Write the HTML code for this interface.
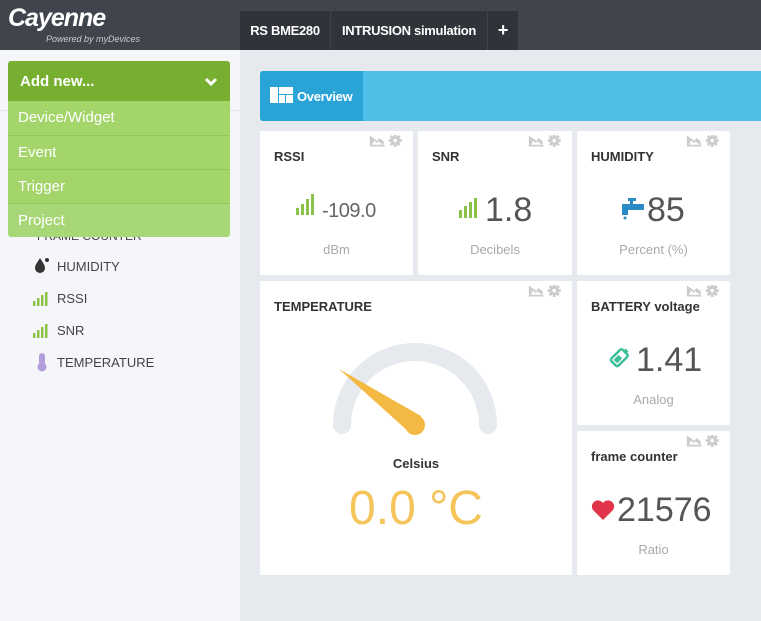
<!DOCTYPE html>
<html><head><meta charset="utf-8"><style>
*{box-sizing:border-box;margin:0;padding:0}
body{width:761px;height:621px;overflow:hidden;font-family:"Liberation Sans",sans-serif;background:#e6e9ee;position:relative}
.abs{position:absolute}
#top{left:0;top:0;width:761px;height:50px;background:#40444d}
#sidebar{left:0;top:50px;width:240px;height:571px;background:#f4f6f9}
.tab{position:absolute;top:11px;height:39px;background:#30333a;color:#fff;font-weight:bold;font-size:13px;line-height:39px;text-align:center;letter-spacing:-0.3px}
.card{position:absolute;background:#fff;border-radius:2px}
.card h3{position:absolute;left:14px;top:18px;font-size:13px;font-weight:bold;color:#333}
.icons{position:absolute;right:10px;top:4px;width:34px;height:12px}
.val{position:absolute;left:0;width:100%;text-align:center;color:#555;font-weight:normal}
.unit{position:absolute;left:0;width:100%;text-align:center;color:#aaa;font-size:13px}
.menu{position:absolute;left:8px;width:222px;height:34px;background:#a4d56a;color:#fff;font-size:15px;line-height:34px;padding-left:10px;border-top:1px solid #93c65a}
.side{position:absolute;left:57px;font-size:13px;color:#444}
</style></head><body>
<div id="top" class="abs"></div>
<div class="abs" style="left:8px;top:4px;color:#fff;font-size:25px;font-style:italic;font-weight:bold;letter-spacing:-1px">Cayenne</div>
<div class="abs" style="left:46px;top:34px;color:#ccc;font-size:9px;font-style:italic">Powered by myDevices</div>
<div class="tab" style="left:240px;width:90px">RS BME280</div>
<div class="tab" style="left:331px;width:156px">INTRUSION simulation</div>
<div class="tab" style="left:488px;width:30px;font-size:18px">+</div>
<div id="sidebar" class="abs"></div>
<div class="abs" style="left:0;top:110px;width:240px;height:1px;background:#e2e4e8"></div>
<div class="abs" style="left:37px;top:229px;font-size:12px;color:#444">FRAME COUNTER</div>
<svg class="abs" style="left:33px;top:256px" width="18" height="18"><path d="M7 2 C4 7 2 9 2 12 a5 5 0 0 0 10 0 C12 9 10 7 7 2Z" fill="#333"/><circle cx="14" cy="4" r="2" fill="#333"/></svg>
<div class="side" style="top:259px">HUMIDITY</div>
<svg class="abs" style="left:33px;top:290px" width="18" height="18"><g fill="#8bc34a"><rect x="0" y="11" width="2.5" height="5"/><rect x="4" y="8" width="2.5" height="8"/><rect x="8" y="5" width="2.5" height="11"/><rect x="12" y="2" width="2.5" height="14"/></g></svg>
<div class="side" style="top:291px">RSSI</div>
<svg class="abs" style="left:33px;top:322px" width="18" height="18"><g fill="#8bc34a"><rect x="0" y="11" width="2.5" height="5"/><rect x="4" y="8" width="2.5" height="8"/><rect x="8" y="5" width="2.5" height="11"/><rect x="12" y="2" width="2.5" height="14"/></g></svg>
<div class="side" style="top:323px">SNR</div>
<svg class="abs" style="left:36px;top:352px" width="12" height="20"><rect x="3" y="1" width="6" height="13" rx="3" fill="#b39ddb"/><circle cx="6" cy="15" r="4.5" fill="#b39ddb"/></svg>
<div class="side" style="top:355px">TEMPERATURE</div>

<div class="abs" style="left:8px;top:61px;width:222px;height:41px;background:#77b030;border-radius:3px 3px 0 0;color:#fff;font-weight:bold;font-size:15px;line-height:41px;padding-left:12px">Add new...</div>
<svg class="abs" style="left:204px;top:77px" width="14" height="10"><path d="M2 2 L7 7 L12 2" stroke="#fff" stroke-width="3" fill="none"/></svg>
<div class="menu" style="top:101px;border-top:none">Device/Widget</div>
<div class="menu" style="top:135px">Event</div>
<div class="menu" style="top:169px">Trigger</div>
<div class="menu" style="top:203px;border-radius:0 0 3px 3px;background:#a8d778">Project</div>

<div class="abs" style="left:260px;top:71px;width:501px;height:50px;background:#4ebfe6;border-radius:3px 0 0 3px"></div>
<div class="abs" style="left:260px;top:71px;width:103px;height:50px;background:#2aa3d6;border-radius:3px 0 0 3px"></div>
<svg class="abs" style="left:270px;top:87px" width="24" height="17"><g fill="#fff"><rect x="0" y="0" width="8" height="16"/><rect x="9" y="0" width="14" height="7"/><rect x="9" y="8" width="6" height="8"/><rect x="16" y="8" width="7" height="8"/></g></svg>
<div class="abs" style="left:297px;top:89px;color:#fff;font-weight:bold;font-size:13px;letter-spacing:-0.3px">Overview</div>

<svg width="0" height="0" style="position:absolute"><defs><g id="ic"><path d="M0 1 V12 H16 M1 11 L4 5 L7 8 L10 4 L14 7 V11Z" fill="#ccc" stroke="#ccc"/><g transform="translate(27,6)" fill="#ccc"><circle r="5"/><rect x="-1.5" y="-7" width="3" height="14"/><rect x="-7" y="-1.5" width="14" height="3"/><rect x="-1.5" y="-7" width="3" height="14" transform="rotate(45)"/><rect x="-1.5" y="-7" width="3" height="14" transform="rotate(-45)"/><circle r="2" fill="#fff"/></g></g></defs></svg>

<div class="card" style="left:260px;top:131px;width:153px;height:144px"><svg class="icons" viewBox="0 0 34 13"><use href="#ic"/></svg><h3>RSSI</h3>
<svg class="abs" style="left:36px;top:61px" width="24" height="24"><g fill="#8bc34a"><rect x="0" y="16" width="3" height="7"/><rect x="5" y="12" width="3" height="11"/><rect x="10" y="7" width="3" height="16"/><rect x="15" y="2" width="3" height="21"/></g></svg>
<div class="val" style="left:62px;width:auto;top:69px;font-size:20px;color:#666;letter-spacing:-0.5px">-109.0</div>
<div class="unit" style="top:111px">dBm</div></div>

<div class="card" style="left:418px;top:131px;width:154px;height:144px"><svg class="icons" viewBox="0 0 34 13"><use href="#ic"/></svg><h3>SNR</h3>
<svg class="abs" style="left:41px;top:64px" width="24" height="24"><g fill="#8bc34a"><rect x="0" y="15" width="3" height="8"/><rect x="5" y="11" width="3" height="12"/><rect x="10" y="7" width="3" height="16"/><rect x="15" y="3" width="3" height="20"/></g></svg>
<div class="val" style="left:67px;width:auto;top:60px;font-size:34px">1.8</div>
<div class="unit" style="top:111px">Decibels</div></div>

<div class="card" style="left:577px;top:131px;width:153px;height:144px"><svg class="icons" viewBox="0 0 34 13"><use href="#ic"/></svg><h3>HUMIDITY</h3>
<svg class="abs" style="left:43px;top:67px" width="26" height="24"><g fill="#2a8ac4"><rect x="8" y="0" width="8" height="3"/><rect x="10" y="2" width="3" height="5"/><rect x="2" y="6" width="22" height="6" rx="1"/><rect x="2" y="8" width="6" height="9"/><circle cx="5" cy="20" r="1.5"/></g></svg>
<div class="val" style="left:70px;width:auto;top:60px;font-size:34px">85</div>
<div class="unit" style="top:111px">Percent (%)</div></div>

<div class="card" style="left:260px;top:281px;width:312px;height:294px"><svg class="icons" viewBox="0 0 34 13"><use href="#ic"/></svg><h3>TEMPERATURE</h3>
<svg class="abs" style="left:0;top:0" width="312" height="200"><path d="M82 144 A73 73 0 0 1 228 144" stroke="#e6e9ee" stroke-width="18" fill="none" stroke-linecap="round"/><path d="M79 88 L161 135 L150 152 Z" fill="#f4b942"/><circle cx="155" cy="144" r="10" fill="#f4b942"/></svg>
<div class="abs" style="left:0;width:100%;text-align:center;top:175px;font-size:13px;font-weight:bold;color:#333">Celsius</div>
<div class="val" style="top:200px;font-size:48px;color:#f5c45a">0.0 °C</div></div>

<div class="card" style="left:577px;top:281px;width:153px;height:144px"><svg class="icons" viewBox="0 0 34 13"><use href="#ic"/></svg><h3>BATTERY voltage</h3>
<svg class="abs" style="left:30px;top:63px" width="26" height="26"><g transform="rotate(-45 13 13)"><rect x="4" y="8" width="16" height="10" rx="2" fill="none" stroke="#3dbf9a" stroke-width="2.5"/><rect x="6.5" y="10.5" width="7" height="5" fill="#3dbf9a"/><rect x="20" y="11" width="3" height="4" fill="#3dbf9a"/></g></svg>
<div class="val" style="left:59px;width:auto;top:60px;font-size:34px">1.41</div>
<div class="unit" style="top:111px">Analog</div></div>

<div class="card" style="left:577px;top:431px;width:153px;height:144px"><svg class="icons" viewBox="0 0 34 13"><use href="#ic"/></svg><h3 style="font-weight:bold">frame counter</h3>
<svg class="abs" style="left:14px;top:68px" width="24" height="22"><path d="M12 21 L2 11 A5.5 5.5 0 0 1 12 4 A5.5 5.5 0 0 1 22 11 Z" fill="#e0344a"/></svg>
<div class="val" style="left:40px;width:auto;top:60px;font-size:34px">21576</div>
<div class="unit" style="top:111px">Ratio</div></div>
</body></html>
